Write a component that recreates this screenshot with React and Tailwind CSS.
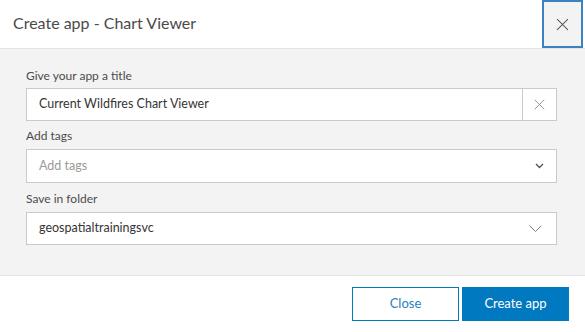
import React from "react";

const XIcon = ({ size = 14, stroke = "#6b6b6b", sw = 1.2 }) => (
  <svg width={size} height={size} viewBox="0 0 16 16" fill="none">
    <path d="M2.5 2.5 L13.5 13.5 M13.5 2.5 L2.5 13.5" stroke={stroke} strokeWidth={sw} strokeLinecap="round" />
  </svg>
);

export default function App() {
  return (
    <div className="w-[585px] h-[332px] bg-white flex flex-col overflow-hidden" style={{ fontFamily: "Lato, 'Open Sans', sans-serif" }}>
      <div className="h-[49px] flex items-stretch border-b border-[#e4e4e4] shrink-0">
        <div className="flex-1 flex items-center pl-[13px] pb-[3px] text-[16px] text-[#4a4a4a]">Create app - Chart Viewer</div>
        <div className="w-[41px] mr-[2px] h-[48px] bg-[#f3f3f3] border-2 border-[#3b83c0] flex items-center justify-center">
          <XIcon size={15} stroke="#595959" sw={1.1} />
        </div>
      </div>
      <div className="bg-[#f3f3f3] pl-[26px] pr-[28px] pt-[19px] pb-[30px] shrink-0">
        <div className="text-[12px] leading-[16px] text-[#4c4c4c]">Give your app a title</div>
        <div className="mt-[4px] h-[33px] flex bg-white border border-[#cacaca]">
          <div className="flex-1 flex items-center pl-[12px] text-[12.5px] text-[#353535]">Current Wildfires Chart Viewer</div>
          <div className="w-[34px] border-l border-[#cacaca] flex items-center justify-center">
            <XIcon size={13} stroke="#8a8a8a" sw={1.1} />
          </div>
        </div>
        <div className="mt-[7px] text-[12px] leading-[16px] text-[#4c4c4c]">Add tags</div>
        <div className="mt-[5px] h-[34px] flex items-center bg-white border border-[#cacaca]">
          <div className="flex-1 pl-[12px] text-[12.5px] text-[#9a9a9a]">Add tags</div>
          <div className="w-[34px] flex items-center justify-center">
            <svg width="9" height="6" viewBox="0 0 9 6" fill="none">
              <path d="M1 1 L4.5 4.5 L8 1" stroke="#555" strokeWidth="1.4" />
            </svg>
          </div>
        </div>
        <div className="mt-[8px] text-[12px] leading-[16px] text-[#4c4c4c]">Save in folder</div>
        <div className="mt-[5px] h-[33px] flex items-center bg-white border border-[#cacaca]">
          <div className="flex-1 pl-[12px] text-[12.5px] text-[#353535]">geospatialtrainingsvc</div>
          <div className="w-[42px] flex items-center justify-center">
            <svg width="13" height="8" viewBox="0 0 13 8" fill="none">
              <path d="M0.7 0.7 L6.5 6.5 L12.3 0.7" stroke="#7a7a7a" strokeWidth="1" />
            </svg>
          </div>
        </div>
      </div>
      <div className="flex-1 border-t border-[#e4e4e4] flex justify-end items-start pt-[11px] pr-[16px] gap-[3px]">
        <button className="w-[107px] h-[34px] border border-[#0079c1] bg-white text-[#2a7fc0] text-[13px]">Close</button>
        <button className="w-[107px] h-[34px] bg-[#0079c1] text-white text-[13px]">Create app</button>
      </div>
    </div>
  );
}
